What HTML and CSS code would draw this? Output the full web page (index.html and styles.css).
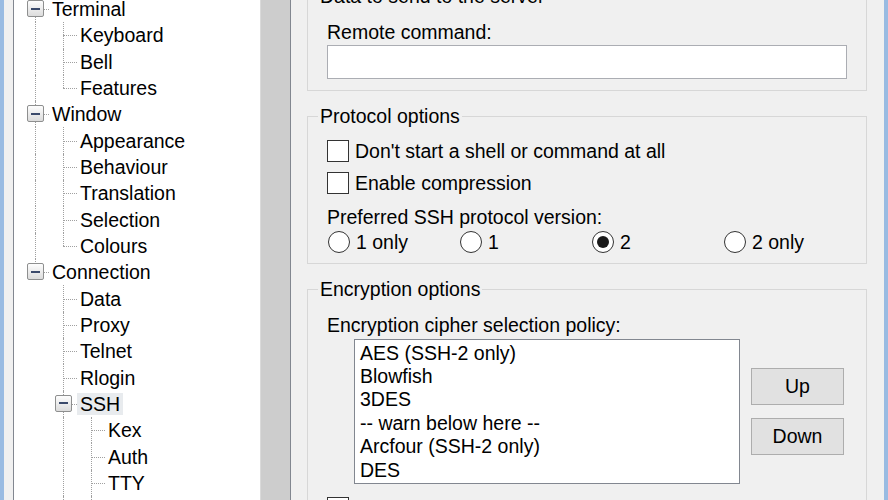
FILE: index.html
```html
<!DOCTYPE html>
<html>
<head>
<meta charset="utf-8">
<link rel="stylesheet" href="styles.css">
</head>
<body>
<div class="window">
  <div class="left">
    <div class="tree-frame">
      <div class="tree">
        <div class="tree-list">
          <div class="row"><span class="c full"><span class="exp"></span></span><span class="lbl">Terminal</span></div>
          <div class="row"><span class="c v"></span><span class="c full"></span><span class="lbl">Keyboard</span></div>
          <div class="row"><span class="c v"></span><span class="c full"></span><span class="lbl">Bell</span></div>
          <div class="row"><span class="c v"></span><span class="c last"></span><span class="lbl">Features</span></div>
          <div class="row"><span class="c full"><span class="exp"></span></span><span class="lbl">Window</span></div>
          <div class="row"><span class="c v"></span><span class="c full"></span><span class="lbl">Appearance</span></div>
          <div class="row"><span class="c v"></span><span class="c full"></span><span class="lbl">Behaviour</span></div>
          <div class="row"><span class="c v"></span><span class="c full"></span><span class="lbl">Translation</span></div>
          <div class="row"><span class="c v"></span><span class="c full"></span><span class="lbl">Selection</span></div>
          <div class="row"><span class="c v"></span><span class="c last"></span><span class="lbl">Colours</span></div>
          <div class="row"><span class="c last"><span class="exp"></span></span><span class="lbl">Connection</span></div>
          <div class="row"><span class="c"></span><span class="c full"></span><span class="lbl">Data</span></div>
          <div class="row"><span class="c"></span><span class="c full"></span><span class="lbl">Proxy</span></div>
          <div class="row"><span class="c"></span><span class="c full"></span><span class="lbl">Telnet</span></div>
          <div class="row"><span class="c"></span><span class="c full"></span><span class="lbl">Rlogin</span></div>
          <div class="row"><span class="c"></span><span class="c full"><span class="exp"></span></span><span class="lbl sel">SSH</span></div>
          <div class="row"><span class="c"></span><span class="c v"></span><span class="c full"></span><span class="lbl">Kex</span></div>
          <div class="row"><span class="c"></span><span class="c v"></span><span class="c full"></span><span class="lbl">Auth</span></div>
          <div class="row"><span class="c"></span><span class="c v"></span><span class="c full"></span><span class="lbl">TTY</span></div>
          <div class="row"><span class="c"></span><span class="c v"></span><span class="c full"></span><span class="lbl">X11</span></div>
        </div>
      </div>
      <div class="scroll"></div>
    </div>
  </div>

  <div class="right">
    <fieldset class="group">
      <legend>Data to send to the server</legend>
      <div class="gbody data">
        <div class="label">Remote command:</div>
        <div class="input"></div>
      </div>
    </fieldset>

    <fieldset class="group">
      <legend>Protocol options</legend>
      <div class="gbody proto">
        <div class="check"><span class="box"></span><span>Don't start a shell or command at all</span></div>
        <div class="check"><span class="box"></span><span>Enable compression</span></div>
        <div class="label pref">Preferred SSH protocol version:</div>
        <div class="radios">
          <div class="radio"><span class="rb"></span><span>1 only</span></div>
          <div class="radio"><span class="rb"></span><span>1</span></div>
          <div class="radio"><span class="rb on"></span><span>2</span></div>
          <div class="radio"><span class="rb"></span><span>2 only</span></div>
        </div>
      </div>
    </fieldset>

    <fieldset class="group">
      <legend>Encryption options</legend>
      <div class="gbody enc">
        <div class="label">Encryption cipher selection policy:</div>
        <div class="listrow">
          <div class="list">
            <div class="item">AES (SSH-2 only)</div>
            <div class="item">Blowfish</div>
            <div class="item">3DES</div>
            <div class="item">-- warn below here --</div>
            <div class="item">Arcfour (SSH-2 only)</div>
            <div class="item">DES</div>
          </div>
          <div class="btns">
            <div class="btn">Up</div>
            <div class="btn">Down</div>
          </div>
        </div>
        <div class="check last-check"><span class="box"></span><span>Enable legacy use of single-DES in SSH-2</span></div>
      </div>
    </fieldset>
  </div>
</div>
</body>
</html>
```
FILE: styles.css
```css
* { box-sizing: border-box; }
html, body { margin: 0; height: 500px; overflow: hidden; }
body {
  background: #f0f0f0;
  font-family: "Liberation Sans", Arial, sans-serif;
  font-size: 19.5px;
  color: #000;
}
.window {
  display: flex;
  height: 500px;
  border-left: 4px solid #99bbe2;
  border-right: 4px solid #99bbe2;
}

/* tree */
.left { flex: none; padding-left: 9px; }
.tree-frame {
  display: flex;
  height: 500px;
  border-left: 1px solid #828790;
  border-right: 1px solid #828790;
}
.tree { width: 246px; background: #fff; padding-left: 7px; overflow: hidden; }
.tree-list { margin-top: -4.17px; }
.row { display: flex; align-items: center; height: 26.33px; }
.c { position: relative; flex: none; width: 28px; height: 100%; }
.c.v::before, .c.full::before, .c.last::before {
  content: "";
  position: absolute;
  left: 14px; top: 0; bottom: 0;
  border-left: 1px dotted #a0a0a0;
}
.c.last::before { bottom: 50%; }
.c.full::after, .c.last::after {
  content: "";
  position: absolute;
  left: 14px; right: 0; top: 50%;
  border-top: 1px dotted #a0a0a0;
}
.exp {
  position: absolute;
  left: 6px; top: 50%;
  margin-top: -9px;
  width: 17px; height: 17px;
  border: 1px solid #8e8f8f;
  border-radius: 2px;
  background: linear-gradient(#fdfdfd, #dcdcdc);
  z-index: 1;
}
.exp::after {
  content: "";
  position: absolute;
  left: 3px; right: 3px; top: 6.5px;
  height: 2px;
  background: #3b4a6b;
}
.lbl { padding: 0 3px; line-height: 22px; white-space: nowrap; }
.lbl.sel { background: #e8ebee; }
.scroll { width: 30px; background: #cdcdcd; border-left: 1px solid #dadada; }

/* right side */
.right { flex: 1; min-width: 0; padding: 0 17px 0 16px; margin-top: -17px; }
fieldset.group {
  margin: 0;
  padding: 0 19px;
  min-width: 0;
  border: 1px solid #d7d7d7;
}
fieldset.group + fieldset.group { margin-top: 12px; }
legend { padding: 0 2px; margin-left: -9px; line-height: 26px; }
.label { line-height: 26px; white-space: nowrap; }

.data { padding-top: 10px; padding-bottom: 11px; }
.input { height: 34px; background: #fff; border: 1px solid #abadb3; }

.proto { padding-top: 6px; padding-bottom: 8px; }
.check { display: flex; align-items: center; gap: 6px; height: 32px; white-space: nowrap; }
.box { flex: none; width: 22px; height: 22px; border: 1px solid #333; background: #fff; }
.label.pref { line-height: 24px; margin-top: 6px; }
.radios { display: grid; grid-template-columns: repeat(4, 132px); height: 26px; }
.radio { display: flex; align-items: center; gap: 6px; white-space: nowrap; }
.rb {
  position: relative;
  flex: none;
  width: 22px; height: 22px;
  margin-left: 1px;
  border: 1px solid #333;
  border-radius: 50%;
  background: #fff;
}
.rb.on::after {
  content: "";
  position: absolute;
  left: 4px; top: 4px;
  width: 12px; height: 12px;
  border-radius: 50%;
  background: #1a1a1a;
}

.enc { padding-top: 10px; padding-bottom: 20px; }
.listrow { display: flex; align-items: center; margin-top: 1px; }
.list {
  flex: none;
  width: 386px; height: 145px;
  margin-left: 27px;
  padding: 1.5px 0 0 5px;
  background: #fff;
  border: 1px solid #828790;
}
.item { line-height: 23.4px; white-space: nowrap; }
.btns { display: flex; flex-direction: column; gap: 13px; margin-left: 11px; }
.btn {
  display: flex; align-items: center; justify-content: center;
  width: 93px; height: 37px;
  background: #e1e1e1;
  border: 1px solid #adadad;
}
.last-check { margin-top: 8px; }
```
